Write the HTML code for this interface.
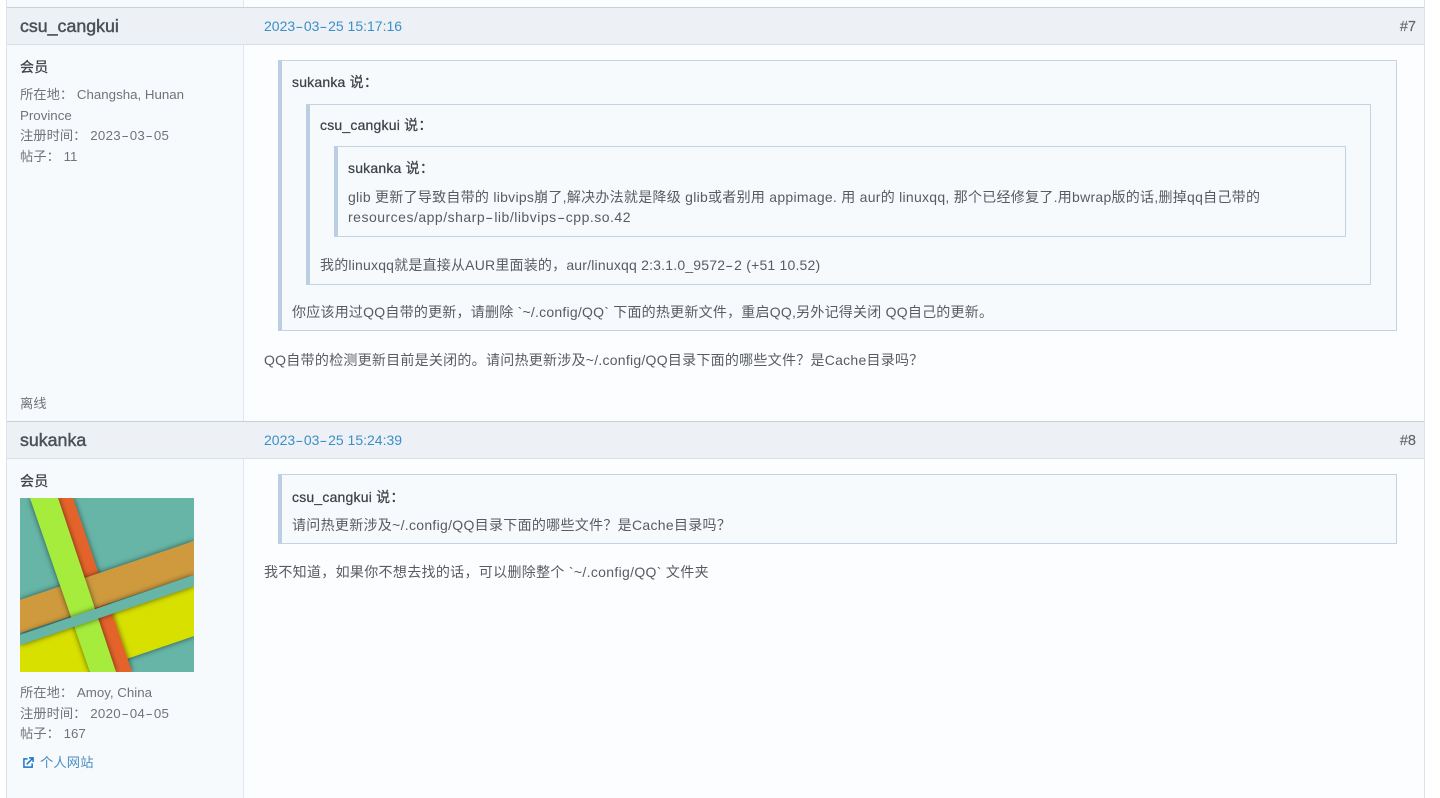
<!DOCTYPE html>
<html lang="zh"><head><meta charset="utf-8"><title>Forum</title>
<style>
html,body{margin:0;padding:0;width:1440px;height:798px;overflow:hidden;background:#fff}
body{position:relative;font-family:"Liberation Sans","Noto Sans CJK SC",sans-serif;font-size:14px;color:#555a60}
.a{position:absolute}
.t{position:absolute;line-height:20px;height:20px;white-space:nowrap;filter:blur(.25px)}
.side{font-size:13.3px;color:#6f747b}
.sd{letter-spacing:.3px}
.b{color:#3d4248;-webkit-text-stroke:.25px #3d4248;letter-spacing:.2px}
.u{font-size:17.8px;color:#4a5058;-webkit-text-stroke:.45px #4a5058}
.d{color:#3b8fc8}
.n{color:#666;right:24px;font-size:14.5px;-webkit-text-stroke:.15px #666}
.h{position:absolute;left:7px;width:1417px;height:36px;background:#edf1f5;border-top:1px solid #c6d0da;border-bottom:1px solid #d5e0ea}
.q{position:absolute;box-sizing:border-box;background:#f7fafd;border:1px solid #c3d3e3;border-left:4px solid #bccfe2}
.x{color:#585c62;letter-spacing:.29px}
.w{display:inline-block;transform:scaleX(1.7);margin:0 2px}
</style></head><body>
<div class="a" style="left:6px;top:0;width:1px;height:798px;background:#dbe4ec"></div>
<div class="a" style="left:1424px;top:0;width:1px;height:798px;background:#dbe4ec"></div>
<div class="a" style="left:7px;top:0;width:236px;height:798px;background:#f7fafd"></div>
<div class="a" style="left:244px;top:0;width:1180px;height:798px;background:#fcfdff"></div>
<div class="a" style="left:243px;top:0;width:1px;height:798px;background:#dfe7ef"></div>

<div class="h" style="top:7px"></div>
<div class="t u" style="left:20px;top:16px">csu_cangkui</div>
<div class="t d" style="left:264px;top:16px">2023<span class="w">-</span>03<span class="w">-</span>25 15:17:16</div>
<div class="t n" style="top:17px">#7</div>

<div class="t b" style="left:20px;top:57px">会员</div>
<div class="t side" style="left:20px;top:85px">所在地： Changsha, Hunan</div>
<div class="t side" style="left:20px;top:106px">Province</div>
<div class="t side" style="left:20px;top:126px">注册时间： <span class="sd">2023<span class="w">-</span>03<span class="w">-</span>05</span></div>
<div class="t side" style="left:20px;top:147px">帖子： 11</div>
<div class="t side" style="left:20px;top:394px">离线</div>

<div class="q" style="left:278px;top:60px;width:1119px;height:271px"></div>
<div class="q" style="left:306px;top:104px;width:1065px;height:181px"></div>
<div class="q" style="left:334px;top:146px;width:1012px;height:91px"></div>
<div class="t b" style="left:292px;top:72px">sukanka 说：</div>
<div class="t b" style="left:320px;top:115px">csu_cangkui 说：</div>
<div class="t b" style="left:348px;top:158px">sukanka 说：</div>
<div class="t x" style="left:348px;top:187px;letter-spacing:.27px">glib 更新了导致自带的 libvips崩了,解决办法就是降级 glib或者别用 appimage. 用 aur的 linuxqq, 那个已经修复了.用bwrap版的话,删掉qq自己带的</div>
<div class="t x" style="left:348px;top:207px;letter-spacing:.5px">resources/app/sharp<span class="w">-</span>lib/libvips<span class="w">-</span>cpp.so.42</div>
<div class="t x" style="left:320px;top:255px;letter-spacing:.2px">我的linuxqq就是直接从AUR里面装的，aur/linuxqq 2:3.1.0_9572<span class="w">-</span>2 (+51 10.52)</div>
<div class="t x" style="left:292px;top:302px;letter-spacing:.23px">你应该用过QQ自带的更新，请删除 `~/.config/QQ` 下面的热更新文件，重启QQ,另外记得关闭 QQ自己的更新。</div>
<div class="t x" style="left:264px;top:350px;letter-spacing:.26px">QQ自带的检测更新目前是关闭的。请问热更新涉及~/.config/QQ目录下面的哪些文件？是Cache目录吗？</div>

<div class="h" style="top:421px"></div>
<div class="t u" style="left:20px;top:430px">sukanka</div>
<div class="t d" style="left:264px;top:430px">2023<span class="w">-</span>03<span class="w">-</span>25 15:24:39</div>
<div class="t n" style="top:431px">#8</div>

<div class="t b" style="left:20px;top:471px">会员</div>
<svg class="a" style="left:20px;top:498px" width="174" height="174" viewBox="0 0 174 174">
<defs><filter id="s" x="-20%" y="-20%" width="140%" height="140%"><feDropShadow dx="0" dy="0" stdDeviation="3" flood-color="#000" flood-opacity=".6"/></filter></defs>
<rect width="174" height="174" fill="#66b5a6"/>
<polygon points="0,147 174,88 174,138 0,197" fill="#d8e000" filter="url(#s)"/>
<polygon points="37,0 53,0 112,174 95,174" fill="#e4642a" filter="url(#s)"/>
<polygon points="0,102 174,43 174,77 0,135" fill="#cf9a3c" filter="url(#s)"/>
<polygon points="10,0 38,0 96,174 70,174" fill="#a5ec3c" filter="url(#s)"/>
<polygon points="0,137 174,77 174,88 0,147" fill="#66b5a6" filter="url(#s)"/>
</svg>
<div class="t side" style="left:20px;top:683px">所在地： Amoy, China</div>
<div class="t side" style="left:20px;top:704px">注册时间： <span class="sd">2020<span class="w">-</span>04<span class="w">-</span>05</span></div>
<div class="t side" style="left:20px;top:724px">帖子： 167</div>
<svg class="a" style="left:23px;top:757px" width="11" height="11" viewBox="0 0 12 12" fill="none" stroke="#1a73c8" stroke-width="1.6"><path d="M5 2H1v9h9V7"/><path d="M4 8L10.5 1.5M6.5 1H11V5.5"/></svg>
<div class="t side" style="left:40px;top:752.5px;color:#4a8fc4;letter-spacing:.1px">个人网站</div>

<div class="q" style="left:278px;top:474px;width:1119px;height:70px"></div>
<div class="t b" style="left:292px;top:487px">csu_cangkui 说：</div>
<div class="t x" style="left:292px;top:515px;letter-spacing:.3px">请问热更新涉及~/.config/QQ目录下面的哪些文件？是Cache目录吗？</div>
<div class="t x" style="left:264px;top:562px;letter-spacing:.32px">我不知道，如果你不想去找的话，可以删除整个 `~/.config/QQ` 文件夹</div>
</body></html>
